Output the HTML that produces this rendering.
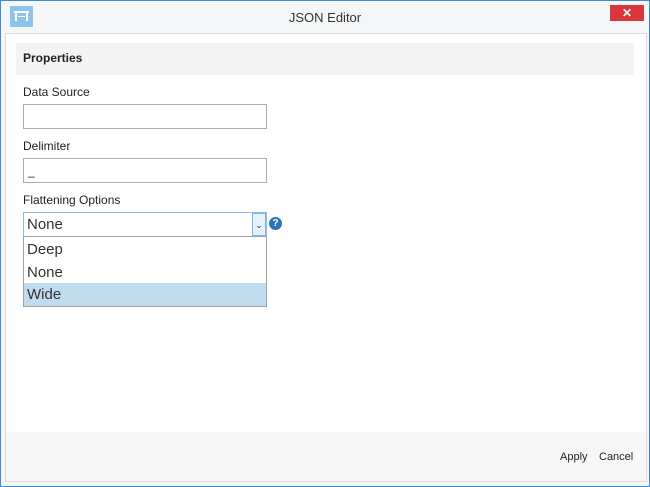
<!DOCTYPE html>
<html><head><style>
*{margin:0;padding:0;box-sizing:border-box}
body{width:650px;height:487px;background:#fff;font-family:"Liberation Sans",sans-serif;position:relative;overflow:hidden;color:#222}
.win{position:absolute;left:0;top:0;width:650px;height:487px;border:1px solid #3c8ad8;background:#f4f6f8}
.abs{position:absolute}
.lbl{position:absolute;font-size:12px;color:#222}
.inp{position:absolute;left:23px;width:244px;height:25px;border:1px solid #acacac;background:#fff}
</style></head><body>
<div class="win"></div>
<div class="abs" style="left:10px;top:6px;width:23px;height:21px;background:#8ec3ec"></div>
<div class="abs" style="left:14px;top:11px;width:15px;height:2px;background:#fff"></div>
<div class="abs" style="left:15px;top:13px;width:2px;height:8px;background:#fff"></div>
<div class="abs" style="left:26px;top:13px;width:2px;height:8px;background:#fff"></div>
<div class="abs" style="left:18px;top:16px;width:7px;height:1px;background:#fff"></div>
<div class="abs" style="left:0;top:10px;width:650px;text-align:center;font-size:13px;color:#333">JSON Editor</div>
<div class="abs" style="left:610px;top:5px;width:34px;height:16px;background:#d9363e;color:#fff;font-size:12px;text-align:center;line-height:16px;font-weight:bold">✕</div>
<div class="abs" style="left:5px;top:33px;width:642px;height:449px;background:#fff;border:1px solid #dcdcdc"></div>
<div class="abs" style="left:16px;top:43px;width:618px;height:32px;background:#f3f3f3"></div>
<div class="lbl" style="left:23px;top:51px;font-weight:bold">Properties</div>
<div class="lbl" style="left:23px;top:85px">Data Source</div>
<div class="inp" style="top:104px"></div>
<div class="lbl" style="left:23px;top:139px">Delimiter</div>
<div class="inp" style="top:158px"><span style="position:absolute;left:4px;top:5px;font-size:12px">_</span></div>
<div class="lbl" style="left:23px;top:193px">Flattening Options</div>
<div class="inp" style="top:212px;border-color:#8fb8dd"><span style="position:absolute;left:3px;top:3px;font-size:15px;color:#333">None</span>
<div class="abs" style="right:0;top:0;width:14px;height:23px;border:1px solid #7eb4ea;background:#e5f1fb;font-size:9px;text-align:center;line-height:22px;color:#333">⌄</div></div>
<div class="abs" style="left:269px;top:217px;width:13px;height:13px;border-radius:50%;background:#2e75b6;color:#fff;font-size:10px;font-weight:bold;text-align:center;line-height:13px">?</div>
<div class="abs" style="left:23px;top:236px;width:244px;height:71px;border:1px solid #a0a0a0;background:#fff"></div>
<div class="abs" style="left:27px;top:241px;font-size:15px;color:#333">Deep</div>
<div class="abs" style="left:27px;top:264px;font-size:15px;color:#333">None</div>
<div class="abs" style="left:24px;top:283px;width:242px;height:23px;background:#c0daee"></div>
<div class="abs" style="left:27px;top:286px;font-size:15px;color:#333">Wide</div>
<div class="abs" style="left:6px;top:432px;width:640px;height:49px;background:#f7f7f7"></div>
<div class="abs" style="left:560px;top:451px;font-size:11px;color:#222">Apply</div>
<div class="abs" style="left:599px;top:451px;font-size:11px;color:#222">Cancel</div>
</body></html>
